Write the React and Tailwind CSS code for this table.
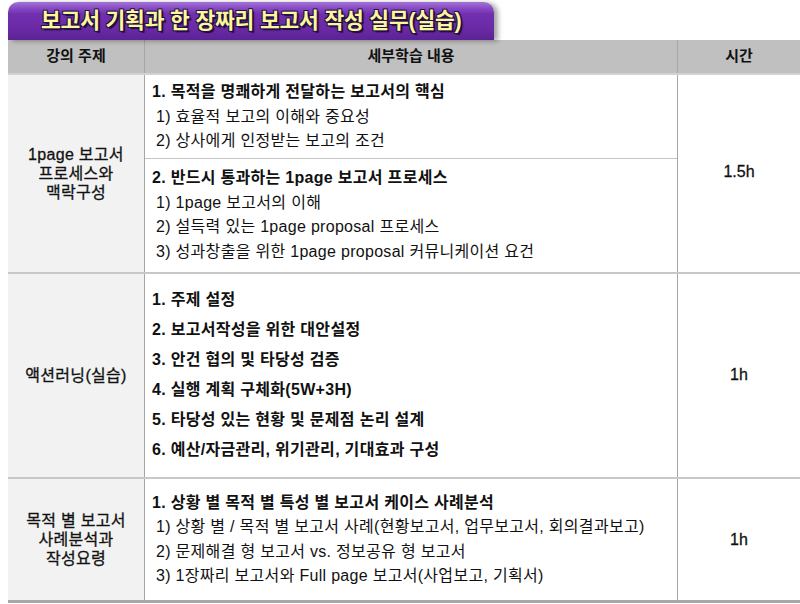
import React from "react";

const F = "font-['Liberation_Sans','Noto_Sans_CJK_KR',sans-serif]";

function Bold({ children }) {
  return <div className="font-bold pl-[7px] whitespace-nowrap">{children}</div>;
}
function Sub({ children }) {
  return <div className="pl-[11px] whitespace-nowrap">{children}</div>;
}

export default function App() {
  return (
    <div className={`${F} w-[800px] h-[604px] bg-white text-[#111] overflow-hidden`}>
      <div className="pl-[8px] pt-[2px]">
        {/* Title tab */}
        <div className="flex">
          <div className="relative w-[486px] h-[38px] rounded-t-[10px] bg-[linear-gradient(180deg,#a572d6_0%,#8448c2_18%,#7130ae_32%,#6a2aa6_70%,#5c2294_100%)] shadow-[4px_1px_5px_rgba(0,0,0,0.35)] flex items-center pl-[33px]">
            <span className="text-[21.5px] font-bold text-[#fff59a] tracking-[-0.2px] [text-shadow:1px_1px_0_#20124a,-1px_-1px_0_#20124a,1px_-1px_0_#20124a,-1px_1px_0_#20124a,2px_2px_1px_#1a0d3a]">
              보고서 기획과 한 장짜리 보고서 작성 실무(실습)
            </span>
          </div>
        </div>

        {/* Header */}
        <div className="grid grid-cols-[137px_533px_122px] h-[35px] bg-[#c0c0c0] border-b-2 border-[#d2d2d2] text-[15px] font-bold">
          <div className="flex items-center justify-center border-r border-[#a6a6a6]">강의 주제</div>
          <div className="flex items-center justify-center border-r border-[#a6a6a6]">세부학습 내용</div>
          <div className="flex items-center justify-center">시간</div>
        </div>

        {/* Row 1 */}
        <div className="grid grid-cols-[137px_533px_122px] h-[199px] border-b-2 border-[#c8c8c8] text-[16px] tracking-[0.3px]">
          <div className="bg-[#f2f2f2] border-r border-[#a6a6a6] flex flex-col items-center justify-center leading-[19px] text-center [-webkit-text-stroke:0.3px_#111]">
            <div>1page 보고서</div>
            <div>프로세스와</div>
            <div>맥락구성</div>
          </div>
          <div className="border-r border-[#a6a6a6] flex flex-col">
            <div className="h-[84px] border-b border-[#c4c4c4] pt-[5px] leading-[24.5px]">
              <Bold>1. 목적을 명쾌하게 전달하는 보고서의 핵심</Bold>
              <Sub>1) 효율적 보고의 이해와 중요성</Sub>
              <Sub>2) 상사에게 인정받는 보고의 조건</Sub>
            </div>
            <div className="flex-1 pt-[7px] leading-[24.5px]">
              <Bold>2. 반드시 통과하는 1page 보고서 프로세스</Bold>
              <Sub>1) 1page 보고서의 이해</Sub>
              <Sub>2) 설득력 있는 1page proposal 프로세스</Sub>
              <Sub>3) 성과창출을 위한 1page proposal 커뮤니케이션 요건</Sub>
            </div>
          </div>
          <div className="flex items-center justify-center text-[16px] tracking-normal pb-[4px] [-webkit-text-stroke:0.3px_#111]">1.5h</div>
        </div>

        {/* Row 2 */}
        <div className="grid grid-cols-[137px_533px_122px] h-[205px] border-b-2 border-[#c8c8c8] text-[16px] tracking-[0.3px]">
          <div className="bg-[#f2f2f2] border-r border-[#a6a6a6] flex items-center justify-center [-webkit-text-stroke:0.3px_#111]">
            액션러닝(실습)
          </div>
          <div className="border-r border-[#a6a6a6] flex flex-col justify-center leading-[30px] pb-[2px]">
            <Bold>1. 주제 설정</Bold>
            <Bold>2. 보고서작성을 위한 대안설정</Bold>
            <Bold>3. 안건 협의 및 타당성 검증</Bold>
            <Bold>4. 실행 계획 구체화(5W+3H)</Bold>
            <Bold>5. 타당성 있는 현황 및 문제점 논리 설계</Bold>
            <Bold>6. 예산/자금관리, 위기관리, 기대효과 구성</Bold>
          </div>
          <div className="flex items-center justify-center text-[16px] tracking-normal pb-[2px] [-webkit-text-stroke:0.3px_#111]">1h</div>
        </div>

        {/* Row 3 */}
        <div className="grid grid-cols-[137px_533px_122px] h-[124px] border-b-[3px] border-[#a8a8a8] text-[16px] tracking-[0.3px]">
          <div className="bg-[#f2f2f2] border-r border-[#a6a6a6] flex flex-col items-center justify-center leading-[19px] text-center [-webkit-text-stroke:0.3px_#111]">
            <div>목적 별 보고서</div>
            <div>사례분석과</div>
            <div>작성요령</div>
          </div>
          <div className="border-r border-[#a6a6a6] flex flex-col justify-center leading-[24.5px]">
            <Bold>1. 상황 별 목적 별 특성 별 보고서 케이스 사례분석</Bold>
            <Sub>1) 상황 별 / 목적 별 보고서 사례(현황보고서, 업무보고서, 회의결과보고)</Sub>
            <Sub>2) 문제해결 형 보고서 vs. 정보공유 형 보고서</Sub>
            <Sub>3) 1장짜리 보고서와 Full page 보고서(사업보고, 기획서)</Sub>
          </div>
          <div className="flex items-center justify-center text-[16px] tracking-normal [-webkit-text-stroke:0.3px_#111]">1h</div>
        </div>
      </div>
    </div>
  );
}
